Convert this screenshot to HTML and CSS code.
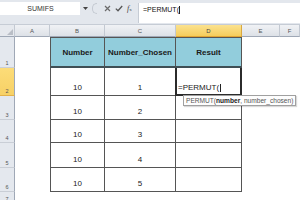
FILE: index.html
```html
<!DOCTYPE html>
<html>
<head>
<meta charset="utf-8">
<link rel="stylesheet" href="styles.css">
</head>
<body>
<div class="app">
  <div class="fbar">
    <div class="namebox"><span class="nb-text">SUMIFS</span></div>
    <div class="nb-arrow"><svg width="5" height="3" viewBox="0 0 5 3"><path d="M0 0H5L2.5 3Z" fill="#444"/></svg></div>
    <div class="tools">
      <span class="grip"></span>
      <svg class="ic" width="7" height="7" viewBox="0 0 7 7"><path d="M1 1L6 6M6 1L1 6" stroke="#6b6b6b" stroke-width="1.2"/></svg>
      <svg class="ic" width="8" height="7" viewBox="0 0 8 7"><path d="M0.8 3.6L3 5.8L7.2 1" stroke="#555" stroke-width="1.3" fill="none"/></svg>
      <span class="fx"><i>f</i><sub>x</sub></span>
    </div>
    <div class="finput">=PERMUT(<span class="caret"></span></div>
  </div>
  <div class="sheet">
    <div class="corner"><svg width="6" height="6" viewBox="0 0 6 6"><path d="M6 0V6H0Z" fill="#b9bec6"/></svg></div>
    <div class="ch">A</div>
    <div class="ch">B</div>
    <div class="ch">C</div>
    <div class="ch sel">D</div>
    <div class="ch">E</div>
    <div class="ch">F</div>

    <div class="rh">1</div>
    <div class="c"></div>
    <div class="t th tl tt">Number</div>
    <div class="t th tt">Number_Chosen</div>
    <div class="t th tt">Result</div>
    <div class="c"></div>
    <div class="c"></div>

    <div class="rh sel">2</div>
    <div class="c"></div>
    <div class="t tl">10</div>
    <div class="t">1</div>
    <div class="t active">=PERMUT(<span class="caret"></span>
      <div class="tip">PERMUT(<b>number</b>, number_chosen)</div>
    </div>
    <div class="c"></div>
    <div class="c"></div>

    <div class="rh">3</div>
    <div class="c"></div>
    <div class="t tl">10</div>
    <div class="t">2</div>
    <div class="t"></div>
    <div class="c"></div>
    <div class="c"></div>

    <div class="rh">4</div>
    <div class="c"></div>
    <div class="t tl">10</div>
    <div class="t">3</div>
    <div class="t"></div>
    <div class="c"></div>
    <div class="c"></div>

    <div class="rh">5</div>
    <div class="c"></div>
    <div class="t tl">10</div>
    <div class="t">4</div>
    <div class="t"></div>
    <div class="c"></div>
    <div class="c"></div>

    <div class="rh">6</div>
    <div class="c"></div>
    <div class="t tl">10</div>
    <div class="t">5</div>
    <div class="t"></div>
    <div class="c"></div>
    <div class="c"></div>

    <div class="rh">7</div>
    <div class="c"></div>
    <div class="c"></div>
    <div class="c"></div>
    <div class="c"></div>
    <div class="c"></div>
    <div class="c"></div>
  </div>
</div>
</body>
</html>
```
FILE: styles.css
```css
html, body {
  margin: 0;
  padding: 0;
  background: #ffffff;
}
.app {
  width: 300px;
  height: 200px;
  overflow: hidden;
  font-family: "Liberation Sans", Arial, sans-serif;
  display: flex;
  flex-direction: column;
}
.fbar {
  flex: none;
  background: #e3e7ed;
  border-bottom: 1px solid #c6ccd5;
  display: flex;
  align-items: flex-start;
  padding-top: 2px;
  box-sizing: border-box;
  height: 25px;
}
.namebox {
  width: 80px;
  height: 13px;
  background: #fff;
  display: flex;
  align-items: center;
  justify-content: center;
}
.nb-text {
  font-size: 7px;
  color: #333;
  margin-left: 1px;
}
.nb-arrow {
  width: 10px;
  height: 13px;
  display: flex;
  align-items: center;
  justify-content: center;
}
.tools {
  display: flex;
  align-items: center;
  height: 13px;
  gap: 4px;
  margin-left: 2px;
  width: 46px;
}
.grip {
  width: 4px;
  height: 9px;
  border: 1px solid #c4c9d1;
  border-right: none;
  border-radius: 5px 0 0 5px;
  margin-right: 3px;
}
.ic {
  display: block;
}
.fx {
  font-family: "Liberation Serif", serif;
  font-size: 8px;
  color: #444;
  line-height: 1;
}
.fx sub {
  font-size: 5px;
  vertical-align: baseline;
}
.finput {
  flex: 1;
  height: 20px;
  margin-top: 1px;
  background: #fff;
  border-left: 1px solid #c6ccd5;
  font-size: 7px;
  color: #111;
  padding: 3px 0 0 4px;
  box-sizing: border-box;
  display: flex;
  align-items: flex-start;
}
.caret {
  display: inline-block;
  width: 1px;
  height: 8px;
  background: #222;
  margin-left: 0.5px;
}
.sheet {
  flex: 1;
  display: grid;
  grid-template-columns: 15px 35px 55px 71px 66px 38px 20px;
  grid-template-rows: 12px 31px 28px 24px 23px 25px 24px 12px;
}
.corner {
  background: #e6e9ee;
  border-right: 1px solid #c3c9d2;
  border-bottom: 1px solid #9fa8b6;
  display: flex;
  align-items: flex-end;
  justify-content: flex-end;
  padding: 1px;
  box-sizing: border-box;
}
.ch {
  background: linear-gradient(#f0f2f5, #dde1e7);
  border-right: 1px solid #c3c9d2;
  border-bottom: 1px solid #9fa8b6;
  font-size: 6px;
  color: #555;
  display: flex;
  align-items: center;
  justify-content: center;
  box-sizing: border-box;
}
.ch.sel {
  background: linear-gradient(#fbe28f, #f5cd5c);
  border-bottom: 1px solid #e0a532;
  border-right-color: #d9a940;
  color: #444;
}
.rh {
  background: #e4e8ee;
  border-right: 1px solid #9fa8b6;
  border-bottom: 1px solid #c9ced6;
  font-size: 5.5px;
  color: #555;
  display: flex;
  align-items: flex-end;
  justify-content: center;
  padding-bottom: 1px;
  box-sizing: border-box;
}
.rh.sel {
  background: linear-gradient(#fcdc78, #f7d166);
  border-bottom-color: #e4b24a;
}
.c {
  background: #fff;
}
.t {
  position: relative;
  background: #fff;
  border-right: 1px solid #555;
  border-bottom: 1px solid #555;
  font-size: 8px;
  color: #222;
  display: flex;
  align-items: flex-end;
  justify-content: center;
  padding-bottom: 3px;
  box-sizing: border-box;
}
.t.tl {
  border-left: 1px solid #555;
}
.t.tt {
  border-top: 1px solid #555;
}
.t.th {
  background: #92cddc;
  font-weight: bold;
  color: #1a1a1a;
  align-items: center;
  padding-bottom: 0;
  border-bottom: 2px solid #3f4f55;
}
.t.active {
  justify-content: flex-start;
  padding-left: 1px;
  border: 2px solid #2b2b2b;
  border-top: none;
  margin-left: -1px;
  padding-bottom: 2px;
  align-items: flex-end;
}
.tip {
  position: absolute;
  left: 6px;
  top: 100%;
  margin-top: 1px;
  white-space: nowrap;
  font-size: 6.6px;
  font-weight: normal;
  color: #555;
  background: #fdfdfd;
  border: 1px solid #a0a0a0;
  padding: 1px 2px;
  line-height: 7px;
  z-index: 2;
  box-shadow: 1px 1px 1px rgba(0,0,0,0.15);
}
.tip b {
  color: #222;
}
```
